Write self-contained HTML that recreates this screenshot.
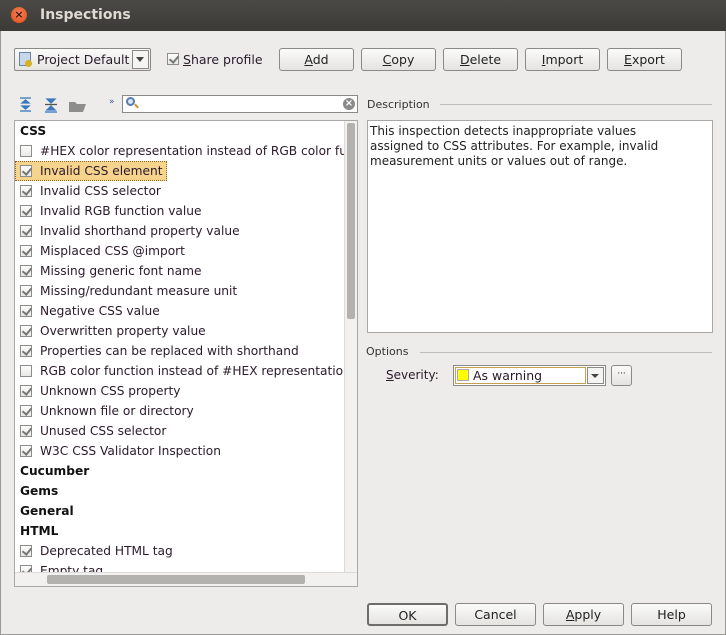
<!DOCTYPE html>
<html><head><meta charset="utf-8"><style>
*{box-sizing:border-box;margin:0;padding:0}
body{width:726px;height:635px;background:#edeceb;font-family:"DejaVu Sans","Liberation Sans",sans-serif;font-size:12px;color:#2a1a2a;position:relative;overflow:hidden}
.a{position:absolute}
.title{left:0;top:0;width:726px;height:31px;background:linear-gradient(#4a4945,#3c3b37);color:#dfdbd2;font-weight:bold;font-size:14px;line-height:31px;padding-left:40px}
.close{left:11px;top:7px;width:16px;height:16px;border-radius:50%;background:radial-gradient(circle at 50% 40%,#f5825a,#df4a16);color:#3a1a10;font-size:11px;line-height:16px;text-align:center;font-weight:bold}
.btn{height:23px;border:1px solid #8a8985;border-radius:3px;background:linear-gradient(#fbfbfa,#e4e3e0);text-align:center;line-height:21px;font-size:12.5px;color:#222}
.list{left:14px;top:120px;width:344px;height:467px;background:#fff;border:1px solid #a9a8a4;overflow:hidden}
.row{position:absolute;left:0;height:20px;line-height:20px;white-space:nowrap;font-size:12.2px}
.row.h{font-weight:bold;left:5px;color:#111}
.cb{position:absolute;left:5px;top:4px;width:12px;height:12px;border:1px solid #8d8c88;background:linear-gradient(#fdfdfd,#e8e8e6)}
.cb.c::after{content:"";position:absolute;left:3px;top:0px;width:4px;height:7px;border:solid #777;border-width:0 2px 2px 0;transform:rotate(40deg)}
.row .t{position:absolute;left:25px}
.sep{height:1px;background:#bdbcb8}
</style></head><body>
<div class="a title">Inspections</div>
<div class="a close">×</div>

<div class="a" style="left:14px;top:48px;width:137px;height:23px;border:1px solid #8a8985;border-radius:2px;background:linear-gradient(#fbfbfa,#e6e5e2)"></div>
<div class="a" style="left:19px;top:52px;width:12px;height:14px;background:#c8d8ea;border:1px solid #6a84a4"></div>
<div class="a" style="left:25px;top:60px;width:7px;height:7px;border-radius:50%;background:#d8b020"></div>
<div class="a" style="left:37px;top:48px;line-height:23px;font-size:12.5px">Project Default</div>
<div class="a" style="left:132px;top:50px;width:17px;height:19px;border:1px solid #8a8985;background:#f4f4f2"></div>
<div class="a" style="left:136px;top:57px;width:0;height:0;border-left:4px solid transparent;border-right:4px solid transparent;border-top:5px solid #444"></div>

<div class="a cb c" style="left:167px;top:53px"></div>
<div class="a" style="left:183px;top:48px;line-height:23px;font-size:12.5px"><u>S</u>hare profile</div>

<div class="a btn" style="left:279px;top:48px;width:75px"><u>A</u>dd</div>
<div class="a btn" style="left:361px;top:48px;width:75px"><u>C</u>opy</div>
<div class="a btn" style="left:443px;top:48px;width:75px"><u>D</u>elete</div>
<div class="a btn" style="left:525px;top:48px;width:75px"><u>I</u>mport</div>
<div class="a btn" style="left:607px;top:48px;width:75px"><u>E</u>xport</div>

<svg class="a" style="left:17px;top:96px" width="72" height="18">
<g stroke="#3a78c0" stroke-width="1.3" fill="#3a78c0">
<line x1="3" y1="2" x2="14" y2="2"/><line x1="3" y1="15" x2="14" y2="15"/>
<path d="M5 7 L8.5 4 L12 7Z"/><path d="M5 10 L8.5 13 L12 10Z"/>
<line x1="28" y1="8.5" x2="40" y2="8.5" stroke="#555"/>
<path d="M30 3 L34 7 L38 3Z"/><path d="M30 14 L34 10 L38 14Z"/>
<line x1="28" y1="16" x2="40" y2="16"/>
</g>
<path d="M52 6 h6 l2 2 h9 l-3 8 h-14z" fill="#8d8d8a"/>
</svg>
<div class="a" style="left:109px;top:97px;font-size:9px;color:#3a5a8a">»</div>
<div class="a" style="left:122px;top:95px;width:236px;height:18px;background:#fff;border:1px solid #8a8985"></div>
<div class="a" style="left:126px;top:97px;width:9px;height:9px;border:2px solid #5a7ab0;border-radius:50%;background:#dbe8f6"></div>
<div class="a" style="left:134px;top:105px;width:5px;height:2px;background:#c89a30;transform:rotate(45deg)"></div>
<div class="a" style="left:343px;top:98px;width:12px;height:12px;border-radius:50%;background:#8a8a8a;color:#fff;font-size:10px;line-height:12px;text-align:center;font-weight:bold">×</div>

<div class="a list">
<div class="row h" style="top:0">CSS</div>
<div class="row" style="top:20px"><div class="cb"></div><span class="t">#HEX color representation instead of RGB color function</span></div>
<div class="row" style="top:40px;width:152px;background:#f6d48e;border:1px dotted #8a6a2a"><div class="cb c" style="left:4px;top:3px"></div><span class="t" style="left:24px;line-height:18px">Invalid CSS element</span></div>
<div class="row" style="top:60px"><div class="cb c"></div><span class="t">Invalid CSS selector</span></div>
<div class="row" style="top:80px"><div class="cb c"></div><span class="t">Invalid RGB function value</span></div>
<div class="row" style="top:100px"><div class="cb c"></div><span class="t">Invalid shorthand property value</span></div>
<div class="row" style="top:120px"><div class="cb c"></div><span class="t">Misplaced CSS @import</span></div>
<div class="row" style="top:140px"><div class="cb c"></div><span class="t">Missing generic font name</span></div>
<div class="row" style="top:160px"><div class="cb c"></div><span class="t">Missing/redundant measure unit</span></div>
<div class="row" style="top:180px"><div class="cb c"></div><span class="t">Negative CSS value</span></div>
<div class="row" style="top:200px"><div class="cb c"></div><span class="t">Overwritten property value</span></div>
<div class="row" style="top:220px"><div class="cb c"></div><span class="t">Properties can be replaced with shorthand</span></div>
<div class="row" style="top:240px"><div class="cb"></div><span class="t">RGB color function instead of #HEX representation</span></div>
<div class="row" style="top:260px"><div class="cb c"></div><span class="t">Unknown CSS property</span></div>
<div class="row" style="top:280px"><div class="cb c"></div><span class="t">Unknown file or directory</span></div>
<div class="row" style="top:300px"><div class="cb c"></div><span class="t">Unused CSS selector</span></div>
<div class="row" style="top:320px"><div class="cb c"></div><span class="t">W3C CSS Validator Inspection</span></div>
<div class="row h" style="top:340px">Cucumber</div>
<div class="row h" style="top:360px">Gems</div>
<div class="row h" style="top:380px">General</div>
<div class="row h" style="top:400px">HTML</div>
<div class="row" style="top:420px"><div class="cb c"></div><span class="t">Deprecated HTML tag</span></div>
<div class="row" style="top:440px"><div class="cb c"></div><span class="t">Empty tag</span></div>
<div class="a" style="left:0;top:451px;width:342px;height:15px;background:#f2f1f0;border-top:1px solid #dcdbd8"></div>
<div class="a" style="left:32px;top:454px;width:258px;height:9px;background:#b3b2af;border-radius:2px"></div>
<div class="a" style="left:329px;top:0;width:13px;height:451px;background:#f2f1f0;border-left:1px solid #dcdbd8"></div>
<div class="a" style="left:332px;top:2px;width:8px;height:196px;background:#b3b2af;border-radius:2px"></div>
</div>

<div class="a" style="left:367px;top:98px;font-size:11px;color:#333">Description</div>
<div class="a sep" style="left:440px;top:104px;width:272px"></div>
<div class="a" style="left:367px;top:120px;width:346px;height:213px;background:#fff;border:1px solid #a9a8a4;padding:3px 2px;font-size:12px;line-height:15px;color:#222">This inspection detects inappropriate values<br>assigned to CSS attributes. For example, invalid<br>measurement units or values out of range.</div>

<div class="a" style="left:366px;top:345px;font-size:11px;color:#333">Options</div>
<div class="a sep" style="left:420px;top:352px;width:292px"></div>
<div class="a" style="left:386px;top:368px;font-size:12px"><u>S</u>everity:</div>
<div class="a" style="left:453px;top:365px;width:153px;height:21px;border:1px solid #8a8985;background:#fff"></div>
<div class="a" style="left:455px;top:367px;width:131px;height:17px;border:1px solid #c8a050"></div>
<div class="a" style="left:457px;top:369px;width:12px;height:12px;background:#ffff00;border:1px solid #aaa"></div>
<div class="a" style="left:473px;top:367px;line-height:17px;font-size:12.5px">As warning</div>
<div class="a" style="left:587px;top:367px;width:17px;height:17px;border:1px solid #8a8985;background:#f4f4f2"></div>
<div class="a" style="left:591px;top:374px;width:0;height:0;border-left:4px solid transparent;border-right:4px solid transparent;border-top:4px solid #444"></div>
<div class="a btn" style="left:611px;top:365px;width:21px;height:21px;line-height:16px;font-size:9px">···</div>

<div class="a btn" style="left:367px;top:603px;width:81px;border:2px solid #6e6d69">OK</div>
<div class="a btn" style="left:455px;top:603px;width:81px">Cancel</div>
<div class="a btn" style="left:543px;top:603px;width:81px"><u>A</u>pply</div>
<div class="a btn" style="left:631px;top:603px;width:81px">Help</div>
<div class="a" style="left:0;top:31px;width:1px;height:604px;background:#9a9995"></div>
<div class="a" style="left:725px;top:31px;width:1px;height:604px;background:#9a9995"></div>
<div class="a" style="left:0;top:634px;width:726px;height:1px;background:#9a9995"></div>
</body></html>
